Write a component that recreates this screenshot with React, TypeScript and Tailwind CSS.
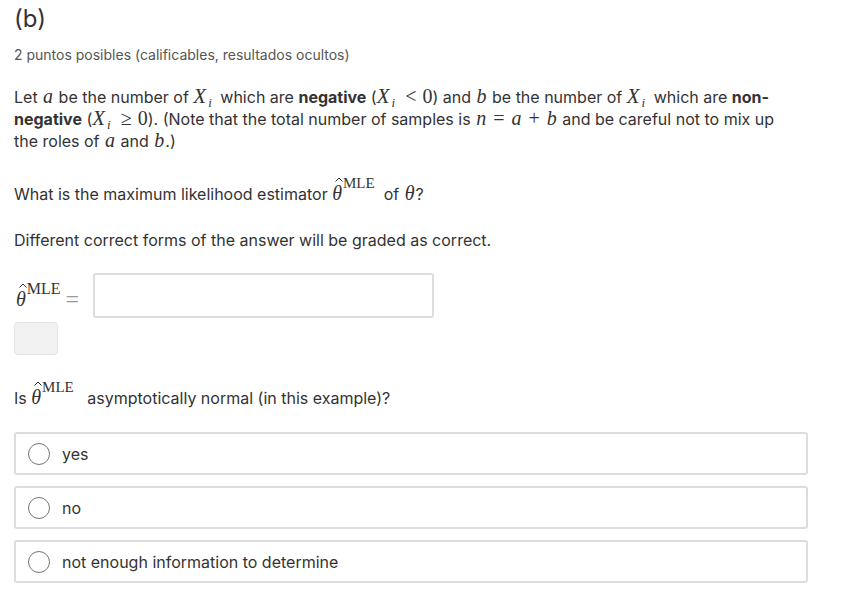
import React from 'react';

const mathFont = { fontFamily: '"Liberation Serif", "DejaVu Serif", serif' };

function V({ children }: { children: React.ReactNode }) {
  return (
    <span className="inline-block italic text-[20px] leading-none px-[1px]" style={mathFont}>
      {children}
    </span>
  );
}

function Rel({ children }: { children: React.ReactNode }) {
  return (
    <span className="inline-block text-[20px] leading-none px-[6px]" style={mathFont}>
      {children}
    </span>
  );
}

function Xi() {
  return (
    <span className="inline-block text-[21px] leading-none pr-[4px]" style={mathFont}>
      <span className="italic">X</span>
      <span className="italic text-[13px] relative top-[4px] ml-[2px]">i</span>
    </span>
  );
}

function ThetaHat({ big = false }: { big?: boolean }) {
  return (
    <span className="inline-block leading-none" style={mathFont}>
      <span className="relative italic text-[20px]">
        θ
        <svg
          className="absolute left-[3px] -top-[5px]"
          width="8"
          height="5"
          viewBox="0 0 8 5"
          fill="none"
          stroke="#333333"
          strokeWidth="1"
        >
          <path d="M0.5 4.5 L4 1 L7.5 4.5" />
        </svg>
      </span>
      <span className={`relative -top-[12px] ml-[1px] ${big ? 'text-[16px]' : 'text-[15px]'}`}>MLE</span>
    </span>
  );
}

function Option({ label }: { label: string }) {
  return (
    <label className="flex items-center h-[43px] border-2 border-[#dddddd] rounded-[3px] px-[12px] cursor-pointer">
      <span className="w-[22px] h-[22px] rounded-full border border-[#767676] bg-white shrink-0" />
      <span className="ml-[12px] text-[16px] text-[#333333]">{label}</span>
    </label>
  );
}

export default function App() {
  return (
    <div
      className="bg-white w-[846px] h-[612px] px-[14px] text-[#333333]"
      style={{ fontFamily: 'Inter, "Noto Sans", sans-serif' }}
    >
      <h3 className="pt-[5px] text-[24px] leading-[28px] font-normal text-[#333333]">(b)</h3>
      <div className="mt-[12px] text-[14px] leading-[20px] text-[#555555]">
        2 puntos posibles (calificables, resultados ocultos)
      </div>

      <p className="mt-[21px] text-[16px] leading-[22px] w-[776px]">
        Let <V>a</V> be the number of <Xi /> which are <b>negative</b> (<Xi />
        <Rel>&lt;</Rel>
        <span className="text-[20px] leading-none" style={mathFont}>0</span>) and <V>b</V> be the number of{' '}
        <Xi /> which are <b>non-negative</b> (<Xi />
        <Rel>≥</Rel>
        <span className="text-[20px] leading-none" style={mathFont}>0</span>). (Note that the total number of
        samples is <V>n</V>
        <Rel>=</Rel>
        <V>a</V>
        <Rel>+</Rel>
        <V>b</V> and be careful not to mix up the roles of <V>a</V> and <V>b</V>.)
      </p>

      <p className="mt-[31px] text-[16px] leading-[22px]">
        What is the maximum likelihood estimator&nbsp;
        <ThetaHat />
        &nbsp;&nbsp;of&nbsp;
        <V>θ</V>?
      </p>

      <p className="mt-[24px] text-[16px] leading-[22px]">
        Different correct forms of the answer will be graded as correct.
      </p>

      <div className="mt-[22px] flex items-center">
        <span className="w-[66px] flex items-center pt-[6px] pl-[2px]">
          <ThetaHat big />
          <span className="ml-[5px] text-[24px] text-[#999999] leading-none" style={mathFont}>
            =
          </span>
        </span>
        <input
          type="text"
          className="ml-[13px] w-[341px] h-[45px] border-2 border-[#dddddd] rounded-[3px] outline-none"
        />
      </div>

      <button className="mt-[4px] block w-[44px] h-[33px] bg-[#f2f2f2] border border-[#e3e3e3] rounded-[4px]" />

      <p className="mt-[32px] text-[16px] leading-[22px]">
        Is&nbsp;
        <ThetaHat />
        &nbsp;&nbsp;&nbsp;asymptotically normal (in this example)?
      </p>

      <div className="mt-[23px] w-[794px] flex flex-col gap-[11px]">
        <Option label="yes" />
        <Option label="no" />
        <Option label="not enough information to determine" />
      </div>
    </div>
  );
}
